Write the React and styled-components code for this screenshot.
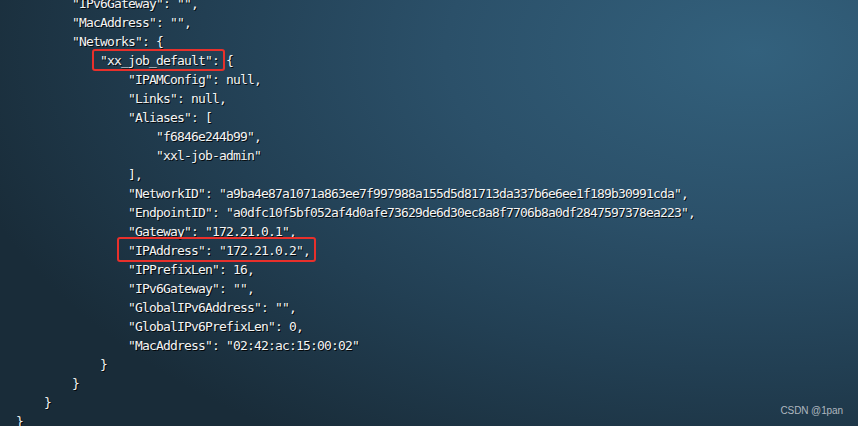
import React from 'react';
import styled, { createGlobalStyle } from 'styled-components';

const GlobalStyle = createGlobalStyle`
  html, body {
    margin: 0;
    padding: 0;
    background: #1e3546;
  }
`;

const Screen = styled.div`
  position: relative;
  width: 858px;
  height: 426px;
  overflow: hidden;
  background: radial-gradient(ellipse 95% 110% at 88% 12%, #33617d 0%, #2b5069 38%, #223f53 68%, #192c39 100%);
`;

const Code = styled.pre`
  margin: -6px 0 0 0;
  padding: 0 0 0 16px;
  font-family: "DejaVu Sans Mono", "Liberation Mono", monospace;
  font-size: 13px;
  letter-spacing: -0.826px;
  line-height: 19px;
  color: #f4f4f4;
  text-shadow: 1px 1px 0 rgba(0, 0, 0, 0.85);
`;

const Line = styled.div`
  height: 19px;
  padding-left: ${props => props.indent * 28}px;
  white-space: pre;
`;

const Marked = styled.span`
  position: relative;
  display: inline-block;
  line-height: 19px;
  &::after {
    content: '';
    position: absolute;
    top: ${props => props.box[0]}px;
    right: ${props => props.box[1]}px;
    bottom: ${props => props.box[2]}px;
    left: ${props => props.box[3]}px;
    border: 2px solid #e8302b;
    border-radius: 3px;
  }
`;

const Watermark = styled.div`
  position: absolute;
  right: 15px;
  bottom: 10px;
  font-family: "Liberation Sans", Arial, sans-serif;
  font-size: 10px;
  color: #aeb7bf;
  letter-spacing: -0.1px;
`;

const lines = [
  { indent: 2, text: '"IPv6Gateway": "",' },
  { indent: 2, text: '"MacAddress": "",' },
  { indent: 2, text: '"Networks": {' },
  { indent: 3, mark: '"xx_job_default":', rest: ' {', box: [-2, -6, -1, -8] },
  { indent: 4, text: '"IPAMConfig": null,' },
  { indent: 4, text: '"Links": null,' },
  { indent: 4, text: '"Aliases": [' },
  { indent: 5, text: '"f6846e244b99",' },
  { indent: 5, text: '"xxl-job-admin"' },
  { indent: 4, text: '],' },
  { indent: 4, text: '"NetworkID": "a9ba4e87a1071a863ee7f997988a155d5d81713da337b6e6ee1f189b30991cda",' },
  { indent: 4, text: '"EndpointID": "a0dfc10f5bf052af4d0afe73629de6d30ec8a8f7706b8a0df2847597378ea223",' },
  { indent: 4, text: '"Gateway": "172.21.0.1",' },
  { indent: 4, mark: '"IPAddress": "172.21.0.2",', rest: '', box: [-4, -6, -2, -11] },
  { indent: 4, text: '"IPPrefixLen": 16,' },
  { indent: 4, text: '"IPv6Gateway": "",' },
  { indent: 4, text: '"GlobalIPv6Address": "",' },
  { indent: 4, text: '"GlobalIPv6PrefixLen": 0,' },
  { indent: 4, text: '"MacAddress": "02:42:ac:15:00:02"' },
  { indent: 3, text: '}' },
  { indent: 2, text: '}' },
  { indent: 1, text: '}' },
  { indent: 0, text: '}' },
];

function App() {
  return (
    <Screen>
      <GlobalStyle />
      <Code>
        {lines.map((l, i) => (
          <Line key={i} indent={l.indent}>
            {l.mark ? (
              <>
                <Marked box={l.box}>{l.mark}</Marked>
                {l.rest}
              </>
            ) : l.text}
          </Line>
        ))}
      </Code>
      <Watermark>CSDN @1pan</Watermark>
    </Screen>
  );
}

export default App;
